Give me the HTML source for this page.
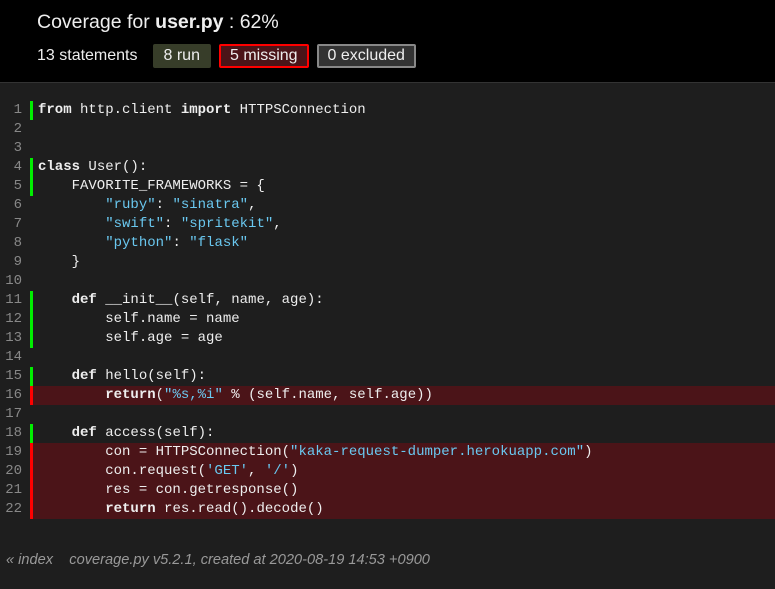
<!DOCTYPE html>
<html><head><style>
body{margin:0;background:#1e1e1e;width:775px;height:589px;overflow:hidden;font-family:"Liberation Sans",sans-serif}
#hdr{background:#000;height:83px;position:relative;border-bottom:1px solid #333;box-sizing:border-box}
h1{position:absolute;left:37px;top:11px;margin:0;font-weight:normal;font-size:19.5px;color:#eee}
h1 b{font-weight:bold}
#st{position:absolute;left:37px;top:44px;font-size:16px;color:#eee;display:flex;align-items:center}
.b{display:inline-block;padding:1px 9px;border:2px solid;border-radius:2px;margin-left:8px;line-height:18px}
#code{position:absolute;top:101px;left:0;width:775px}
.l{height:19px;line-height:19px;font-family:"Liberation Mono",monospace;font-size:14px;color:#eee;white-space:pre;position:relative}
.n{position:absolute;left:0;width:22px;text-align:right;color:#888}
.t{position:absolute;left:30px;right:0;top:0;bottom:0;padding-left:5px;border-left:3px solid transparent}
.r .t{border-color:#0e0}
.m .t{border-color:#f00;background:#4b1418}
.k{font-weight:bold}
.s{color:#6ac8f0}
#ft{position:absolute;top:552px;left:6px;font-size:14.6px;color:#999;font-style:italic;word-spacing:0}
</style></head><body>
<div id="hdr"><h1>Coverage for <b>user.py</b> : 62%</h1>
<div id="st">13 statements<span class="b" style="background:#373d29;border-color:#373d29;margin-left:15px">8 run</span><span class="b" style="background:#4b1418;border-color:#f00">5 missing</span><span class="b" style="background:#333;border-color:#888">0 excluded</span></div></div>
<div id="code">
<div class="l r"><span class="n">1</span><span class="t"><span class="k">from</span> http.client <span class="k">import</span> HTTPSConnection</span></div>
<div class="l"><span class="n">2</span><span class="t"></span></div>
<div class="l"><span class="n">3</span><span class="t"></span></div>
<div class="l r"><span class="n">4</span><span class="t"><span class="k">class</span> User():</span></div>
<div class="l r"><span class="n">5</span><span class="t">    FAVORITE_FRAMEWORKS = {</span></div>
<div class="l"><span class="n">6</span><span class="t">        <span class="s">"ruby"</span>: <span class="s">"sinatra"</span>,</span></div>
<div class="l"><span class="n">7</span><span class="t">        <span class="s">"swift"</span>: <span class="s">"spritekit"</span>,</span></div>
<div class="l"><span class="n">8</span><span class="t">        <span class="s">"python"</span>: <span class="s">"flask"</span></span></div>
<div class="l"><span class="n">9</span><span class="t">    }</span></div>
<div class="l"><span class="n">10</span><span class="t"></span></div>
<div class="l r"><span class="n">11</span><span class="t">    <span class="k">def</span> __init__(self, name, age):</span></div>
<div class="l r"><span class="n">12</span><span class="t">        self.name = name</span></div>
<div class="l r"><span class="n">13</span><span class="t">        self.age = age</span></div>
<div class="l"><span class="n">14</span><span class="t"></span></div>
<div class="l r"><span class="n">15</span><span class="t">    <span class="k">def</span> hello(self):</span></div>
<div class="l m"><span class="n">16</span><span class="t">        <span class="k">return</span>(<span class="s">"%s,%i"</span> % (self.name, self.age))</span></div>
<div class="l"><span class="n">17</span><span class="t"></span></div>
<div class="l r"><span class="n">18</span><span class="t">    <span class="k">def</span> access(self):</span></div>
<div class="l m"><span class="n">19</span><span class="t">        con = HTTPSConnection(<span class="s">"kaka-request-dumper.herokuapp.com"</span>)</span></div>
<div class="l m"><span class="n">20</span><span class="t">        con.request(<span class="s">'GET'</span>, <span class="s">'/'</span>)</span></div>
<div class="l m"><span class="n">21</span><span class="t">        res = con.getresponse()</span></div>
<div class="l m"><span class="n">22</span><span class="t">        <span class="k">return</span> res.read().decode()</span></div>
</div>
<div id="ft">« index &nbsp;&nbsp; coverage.py v5.2.1, created at 2020-08-19 14:53 +0900</div>
</body></html>
